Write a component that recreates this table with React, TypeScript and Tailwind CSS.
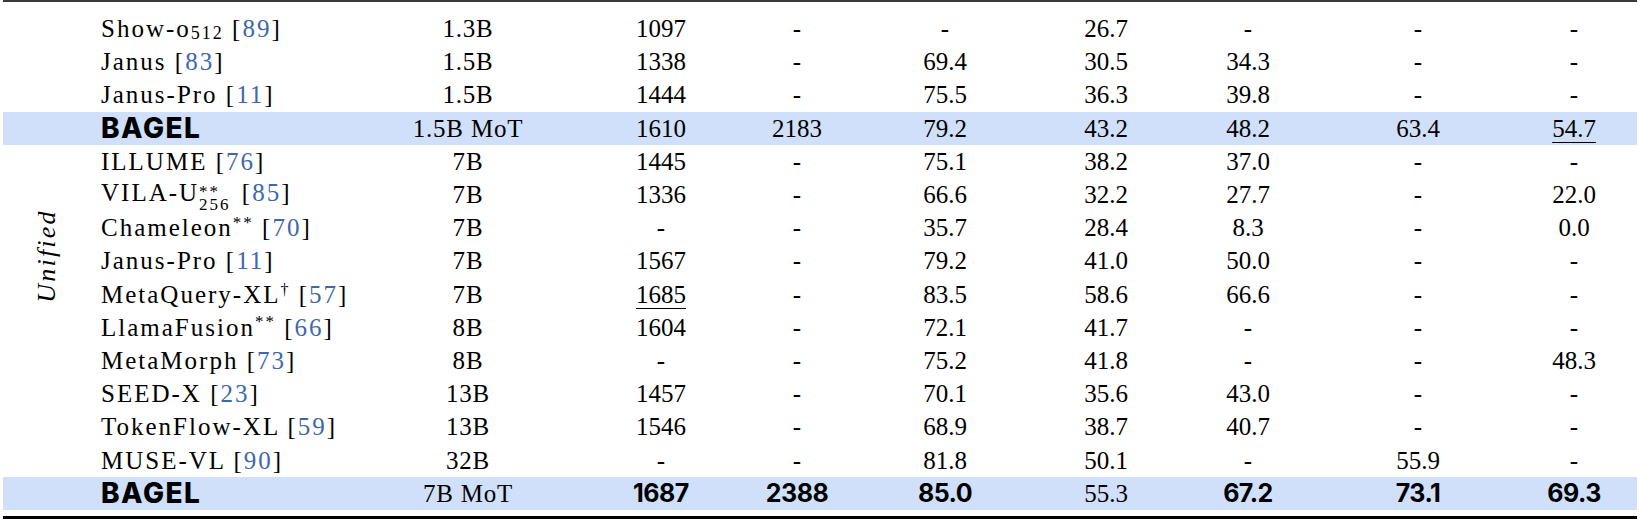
import React from "react";

const SANS = "font-['Inter','Noto_Sans',sans-serif]";

function Cite({ n }: { n: string }) {
  return (
    <>
      {" "}[<span className="text-[#4067ab]">{n}</span>]
    </>
  );
}

type Cell = { t: string; b?: boolean; u?: boolean };
type Row = { name: React.ReactNode; p: string; v: Cell[]; hl?: boolean };

const c = (t: string, o: Partial<Cell> = {}): Cell => ({ t, ...o });

const Bagel = () => (
  <span className={`${SANS} font-extrabold text-[28px] tracking-[1.5px]`}>BAGEL</span>
);

const rows: Row[] = [
  {
    name: (
      <>
        Show-o<sub className="text-[18px] relative top-[2px]">512</sub>
        <Cite n="89" />
      </>
    ),
    p: "1.3B",
    v: ["1097", "-", "-", "26.7", "-", "-", "-"].map((t) => c(t)),
  },
  { name: <>Janus<Cite n="83" /></>, p: "1.5B", v: ["1338", "-", "69.4", "30.5", "34.3", "-", "-"].map((t) => c(t)) },
  { name: <>Janus-Pro<Cite n="11" /></>, p: "1.5B", v: ["1444", "-", "75.5", "36.3", "39.8", "-", "-"].map((t) => c(t)) },
  {
    name: <Bagel />,
    p: "1.5B MoT",
    v: [c("1610"), c("2183"), c("79.2"), c("43.2"), c("48.2"), c("63.4"), c("54.7", { u: true })],
    hl: true,
  },
  { name: <>ILLUME<Cite n="76" /></>, p: "7B", v: ["1445", "-", "75.1", "38.2", "37.0", "-", "-"].map((t) => c(t)) },
  {
    name: (
      <>
        VILA-U
        <span className="inline-flex flex-col align-middle text-[17px] relative top-[3px] mr-[3px]">
          <span className="leading-[11px]">**</span>
          <span className="leading-[15px]">256</span>
        </span>
        <Cite n="85" />
      </>
    ),
    p: "7B",
    v: ["1336", "-", "66.6", "32.2", "27.7", "-", "22.0"].map((t) => c(t)),
  },
  {
    name: (
      <>
        Chameleon<sup className="text-[17px]">**</sup>
        <Cite n="70" />
      </>
    ),
    p: "7B",
    v: ["-", "-", "35.7", "28.4", "8.3", "-", "0.0"].map((t) => c(t)),
  },
  { name: <>Janus-Pro<Cite n="11" /></>, p: "7B", v: ["1567", "-", "79.2", "41.0", "50.0", "-", "-"].map((t) => c(t)) },
  {
    name: (
      <>
        MetaQuery-XL<sup className="text-[16px]">†</sup>
        <Cite n="57" />
      </>
    ),
    p: "7B",
    v: [c("1685", { u: true }), c("-"), c("83.5"), c("58.6"), c("66.6"), c("-"), c("-")],
  },
  {
    name: (
      <>
        LlamaFusion<sup className="text-[17px]">**</sup>
        <Cite n="66" />
      </>
    ),
    p: "8B",
    v: ["1604", "-", "72.1", "41.7", "-", "-", "-"].map((t) => c(t)),
  },
  { name: <>MetaMorph<Cite n="73" /></>, p: "8B", v: ["-", "-", "75.2", "41.8", "-", "-", "48.3"].map((t) => c(t)) },
  { name: <>SEED-X<Cite n="23" /></>, p: "13B", v: ["1457", "-", "70.1", "35.6", "43.0", "-", "-"].map((t) => c(t)) },
  { name: <>TokenFlow-XL<Cite n="59" /></>, p: "13B", v: ["1546", "-", "68.9", "38.7", "40.7", "-", "-"].map((t) => c(t)) },
  { name: <>MUSE-VL<Cite n="90" /></>, p: "32B", v: ["-", "-", "81.8", "50.1", "-", "55.9", "-"].map((t) => c(t)) },
  {
    name: <Bagel />,
    p: "7B MoT",
    v: [
      c("1687", { b: true }),
      c("2388", { b: true }),
      c("85.0", { b: true }),
      c("55.3"),
      c("67.2", { b: true }),
      c("73.1", { b: true }),
      c("69.3", { b: true }),
    ],
    hl: true,
  },
];

// widths of value columns (centers at 660, 796, 944, 1105, 1247, 1417, 1573)
const colW = ["w-[194px]", "w-[78px]", "w-[218px]", "w-[104px]", "w-[180px]", "w-[160px]", "w-[152px]"];

export default function App() {
  return (
    <div className="w-[1640px] h-[520px] bg-white relative overflow-hidden text-black font-['Liberation_Serif','DejaVu_Serif',serif]">
      <div className="mx-[3px]">
        <div className="h-[2px] bg-[#3a3a3a]" />
        <div className="h-[10px]" />
        {rows.map((r, i) => (
          <div
            key={i}
            className={`flex items-center h-[33.2px] text-[25px] leading-none ${r.hl ? "bg-[#d0e0fb]" : ""}`}
          >
            <div className="w-[98px] shrink-0" />
            <div className="w-[271px] shrink-0 whitespace-nowrap tracking-[2px]">{r.name}</div>
            <div className="w-[192px] shrink-0 text-center whitespace-nowrap tracking-[0.8px]">{r.p}</div>
            {r.v.map((cell, j) => (
              <div key={j} className={`${colW[j]} shrink-0 text-center`}>
                {cell.b ? (
                  <span className={`${SANS} font-bold text-[25px] tracking-[-0.5px]`}>{cell.t}</span>
                ) : (
                  <span className={cell.u ? "underline decoration-1 underline-offset-[5px]" : ""}>{cell.t}</span>
                )}
              </div>
            ))}
          </div>
        ))}
        <div className="h-[6px]" />
        <div className="h-[3px] bg-black" />
      </div>
      <div className="absolute left-[47px] top-[256px] -translate-x-1/2 -translate-y-1/2 -rotate-90 italic text-[26px] tracking-[2.2px] whitespace-nowrap leading-none">
        Unified
      </div>
    </div>
  );
}
